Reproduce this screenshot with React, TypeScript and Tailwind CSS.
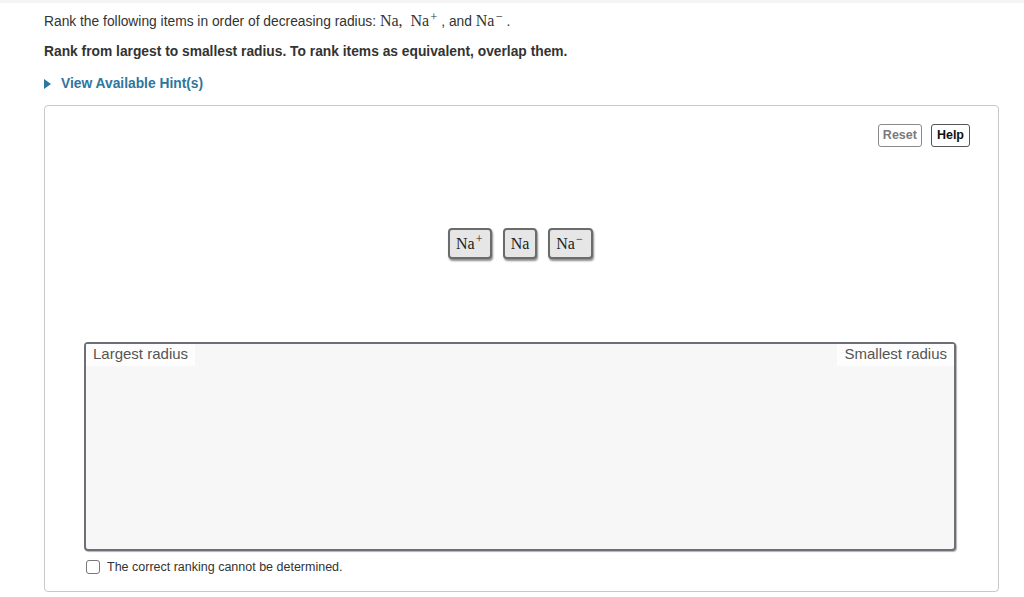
import React from 'react';

const serif = "font-['Liberation_Serif','DejaVu_Serif',serif]";

const Tile = ({ base, sup, supW }: { base: string; sup?: string; supW?: string }) => (
  <div
    className={`h-[31px] flex items-center px-[6px] bg-[#e6e6e6] border-2 border-[#6b6b6b] rounded-[4px] shadow-[1px_2px_2px_rgba(0,0,0,0.45)] text-[16px] leading-none text-[#222] ${serif}`}
  >
    {base}
    {sup && <span className={`text-[12px] relative -top-[5px] ml-[1px] ${supW}`}>{sup}</span>}
  </div>
);

export default function App() {
  return (
    <div className="w-[1024px] h-[597px] bg-white font-['Liberation_Sans',Arial,sans-serif] text-[#333] border-t-[3px] border-[#f4f4f4] overflow-hidden">
      <div className="pl-[44px] pr-[25px]">
        <p className="mt-[8px] text-[13.8px] leading-[20px]">
          Rank the following items in order of decreasing radius:{' '}
          <span className={`${serif} text-[16px]`}>Na,</span>
          <span className="inline-block w-[8px]" />
          <span className={`${serif} text-[16px]`}>
            Na<span className="text-[12.5px] relative -top-[5px] ml-[1px] mr-[4px]">+</span>
          </span>
          , and{' '}
          <span className={`${serif} text-[16px]`}>
            Na<span className="text-[12.5px] relative -top-[5px] ml-[1px] mr-[4px]">−</span>
          </span>
          .
        </p>
        <p className="mt-[10px] text-[13.8px] leading-[20px] font-bold">
          Rank from largest to smallest radius. To rank items as equivalent, overlap them.
        </p>
        <div className="mt-[12px] flex items-center gap-[10px] text-[13.8px] leading-[20px] font-bold text-[#2d769e]">
          <svg width="7" height="10" viewBox="0 0 7 10">
            <path d="M0 0 L7 5 L0 10 Z" fill="#2d769e" />
          </svg>
          <span>View Available Hint(s)</span>
        </div>

        <div className="mt-[11px] w-[955px] h-[487px] border border-[#c8c8c8] rounded-[4px] flex flex-col">
          <div className="flex justify-end gap-[9px] pt-[18px] pr-[28px]">
            <button className="h-[23px] px-[4px] border border-[#8a8a8a] rounded-[3px] text-[12.5px] font-bold text-[#7a7a7a] bg-white">
              Reset
            </button>
            <button className="h-[23px] px-[5px] border border-[#555] rounded-[3px] text-[12.5px] font-bold text-[#111] bg-white">
              Help
            </button>
          </div>

          <div className="flex gap-[11px] pl-[403px] mt-[81px]">
            <Tile base="Na" sup="+" supW="w-[8px]" />
            <Tile base="Na" />
            <Tile base="Na" sup="−" supW="w-[9px]" />
          </div>

          <div className="ml-[39px] mt-[83px] w-[872px] h-[209px] bg-[#f7f7f7] border-2 border-[#6e6e78] rounded-[4px] shadow-[1px_1px_1px_rgba(0,0,0,0.3)] flex justify-between items-start">
            <div className="bg-white/80 h-[22px] px-[7px] text-[15px] leading-[20px] text-[#555]">Largest radius</div>
            <div className="bg-white/80 h-[22px] px-[7px] text-[15px] leading-[20px] text-[#555]">Smallest radius</div>
          </div>

          <div className="ml-[41px] mt-[7px] flex items-center gap-[7px] text-[12.5px] text-[#333]">
            <span className="w-[14px] h-[14px] border border-[#777] rounded-[3px] bg-white" />
            <span>The correct ranking cannot be determined.</span>
          </div>
        </div>
      </div>
    </div>
  );
}
